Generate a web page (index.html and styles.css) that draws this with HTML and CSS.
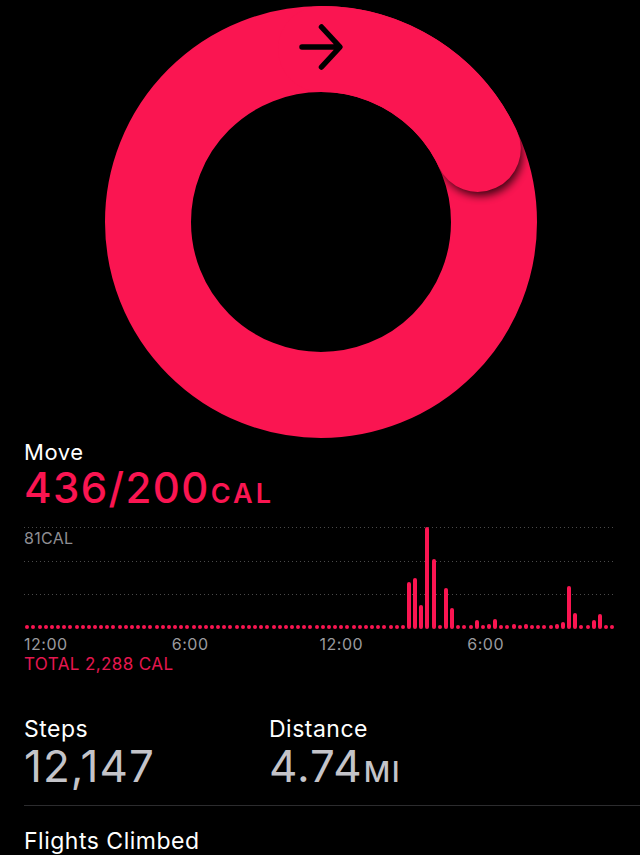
FILE: index.html
```html
<!DOCTYPE html>
<html lang="en">
<head>
<meta charset="utf-8">
<title>Activity – Move</title>
<link rel="stylesheet" href="styles.css">
</head>
<body>
<div class="ring-wrap">
  <svg class="ring" width="640" height="440" viewBox="0 0 640 440" aria-label="Move ring">
    <defs>
      <filter id="capShadow" x="-50%" y="-50%" width="200%" height="200%">
        <feGaussianBlur stdDeviation="4"/>
      </filter>
    </defs>
    <circle cx="321" cy="222" r="173" fill="none" stroke="#fa1551" stroke-width="86"/>
    <circle cx="480.5" cy="154" r="42" fill="#000" opacity="0.75" filter="url(#capShadow)"/>
    <path d="M321 49 A173 173 0 0 1 477.8 148.9" fill="none" stroke="#fa1551" stroke-width="86" stroke-linecap="round"/>
    <path d="M302 47 H339 M321.5 27 L340 47 L321.5 67" fill="none" stroke="#000" stroke-width="5.5" stroke-linecap="round" stroke-linejoin="round"/>
  </svg>
</div>

<main class="content">
  <div class="move-label">Move</div>
  <div class="move-value">436/200<span class="move-unit">CAL</span></div>

  <div class="chart">
    <div class="chart-max">81CAL</div>
    <div class="bars">
      <i class="bar"></i><i class="bar"></i><i class="bar"></i><i class="bar"></i><i class="bar"></i><i class="bar"></i><i class="bar"></i><i class="bar"></i><i class="bar"></i><i class="bar"></i>
      <i class="bar"></i><i class="bar"></i><i class="bar"></i><i class="bar"></i><i class="bar"></i><i class="bar"></i><i class="bar"></i><i class="bar"></i><i class="bar"></i><i class="bar"></i>
      <i class="bar"></i><i class="bar"></i><i class="bar"></i><i class="bar"></i><i class="bar"></i><i class="bar"></i><i class="bar"></i><i class="bar"></i><i class="bar"></i><i class="bar"></i>
      <i class="bar"></i><i class="bar"></i><i class="bar"></i><i class="bar"></i><i class="bar"></i><i class="bar"></i><i class="bar"></i><i class="bar"></i><i class="bar"></i><i class="bar"></i>
      <i class="bar"></i><i class="bar"></i><i class="bar"></i><i class="bar"></i><i class="bar"></i><i class="bar"></i><i class="bar"></i><i class="bar"></i><i class="bar"></i><i class="bar"></i>
      <i class="bar"></i><i class="bar"></i><i class="bar"></i><i class="bar"></i><i class="bar"></i><i class="bar"></i><i class="bar"></i><i class="bar"></i><i class="bar"></i><i class="bar"></i>
      <i class="bar"></i><i class="bar"></i>
      <i class="bar" style="height:47px"></i>
      <i class="bar" style="height:51px"></i>
      <i class="bar" style="height:24px"></i>
      <i class="bar" style="height:102px"></i>
      <i class="bar" style="height:70px"></i>
      <i class="bar"></i>
      <i class="bar" style="height:41px"></i>
      <i class="bar" style="height:21px"></i>
      <i class="bar"></i><i class="bar"></i><i class="bar"></i>
      <i class="bar" style="height:9px"></i>
      <i class="bar"></i>
      <i class="bar" style="height:5px"></i>
      <i class="bar" style="height:10px"></i>
      <i class="bar"></i><i class="bar"></i>
      <i class="bar" style="height:5px"></i>
      <i class="bar"></i>
      <i class="bar" style="height:5px"></i>
      <i class="bar"></i><i class="bar"></i><i class="bar"></i><i class="bar"></i>
      <i class="bar" style="height:5px"></i>
      <i class="bar" style="height:7px"></i>
      <i class="bar" style="height:43px"></i>
      <i class="bar" style="height:16px"></i>
      <i class="bar"></i><i class="bar"></i>
      <i class="bar" style="height:9px"></i>
      <i class="bar" style="height:15px"></i>
      <i class="bar"></i><i class="bar"></i>
    </div>
  </div>

  <div class="axis">
    <span class="tick">12:00</span>
    <span class="tick">6:00</span>
    <span class="tick">12:00</span>
    <span class="tick">6:00</span>
  </div>
  <div class="total">TOTAL 2,288 CAL</div>

  <div class="stats">
    <div class="stat">
      <div class="stat-label">Steps</div>
      <div class="stat-value">12,147</div>
    </div>
    <div class="stat">
      <div class="stat-label">Distance</div>
      <div class="stat-value">4.74<span class="stat-unit">MI</span></div>
    </div>
  </div>
</main>

<div class="divider"></div>

<section class="content">
  <div class="stat-label flights">Flights Climbed</div>
</section>
</body>
</html>
```

FILE: styles.css
```css
html, body {
  margin: 0;
  padding: 0;
  background: #000;
}

body {
  width: 640px;
  height: 855px;
  overflow: hidden;
  font-family: Inter, "Noto Sans", "Liberation Sans", sans-serif;
  color: #fff;
}

.ring-wrap {
  height: 440px;
}

.ring {
  display: block;
}

.content {
  padding: 0 25px 0 24px;
}

.move-label {
  font-size: 22px;
  line-height: 24px;
  letter-spacing: 0.6px;
  color: #fff;
}

.move-value {
  font-size: 42px;
  line-height: 48px;
  letter-spacing: 1.4px;
  color: #fa1551;
  font-weight: 500;
}

.move-unit {
  font-size: 27px;
  line-height: 1;
  font-weight: 600;
  letter-spacing: 3px;
  margin-left: 1px;
}

.chart {
  margin-top: 15px;
  height: 102px;
  display: grid;
  background-image:
    repeating-linear-gradient(90deg, #4a4a4a 0 1px, transparent 1px 4px),
    repeating-linear-gradient(90deg, #4a4a4a 0 1px, transparent 1px 4px),
    repeating-linear-gradient(90deg, #4a4a4a 0 1px, transparent 1px 4px);
  background-size: 100% 1px;
  background-position: 0 0, 0 34px, 0 67px;
  background-repeat: no-repeat;
}

.chart-max {
  grid-area: 1 / 1;
  align-self: start;
  margin-top: 2px;
  font-size: 16px;
  line-height: 18px;
  letter-spacing: 0.3px;
  color: #8e8e93;
}

.bars {
  grid-area: 1 / 1;
  align-self: stretch;
  display: flex;
  align-items: flex-end;
  justify-content: space-between;
  margin: 0 0.7px 0 1.3px;
}

.bar {
  display: block;
  width: 4px;
  height: 4px;
  border-radius: 2px;
  background: #fa1551;
}

.axis {
  margin-top: 5px;
  display: flex;
}

.tick {
  width: 148px;
  font-size: 16px;
  line-height: 20px;
  letter-spacing: 0.5px;
  color: #9a9a9e;
}

.total {
  font-size: 17px;
  line-height: 20px;
  letter-spacing: 0.4px;
  color: #e4174f;
}

.stats {
  margin-top: 42px;
  display: grid;
  grid-template-columns: 245px 1fr;
}

.stat-label {
  font-size: 23px;
  line-height: 26px;
  letter-spacing: 0.5px;
  color: #fff;
}

.stat-value {
  font-size: 44px;
  line-height: 48px;
  letter-spacing: 1px;
  color: #c4c4c9;
}

.stat-unit {
  font-size: 29px;
  line-height: 1;
  font-weight: 500;
  letter-spacing: 1.5px;
  margin-left: 1px;
}

.divider {
  margin: 15px 0 0 24px;
  height: 1px;
  background: #2c2c2e;
}

.flights {
  margin-top: 22px;
}
```
